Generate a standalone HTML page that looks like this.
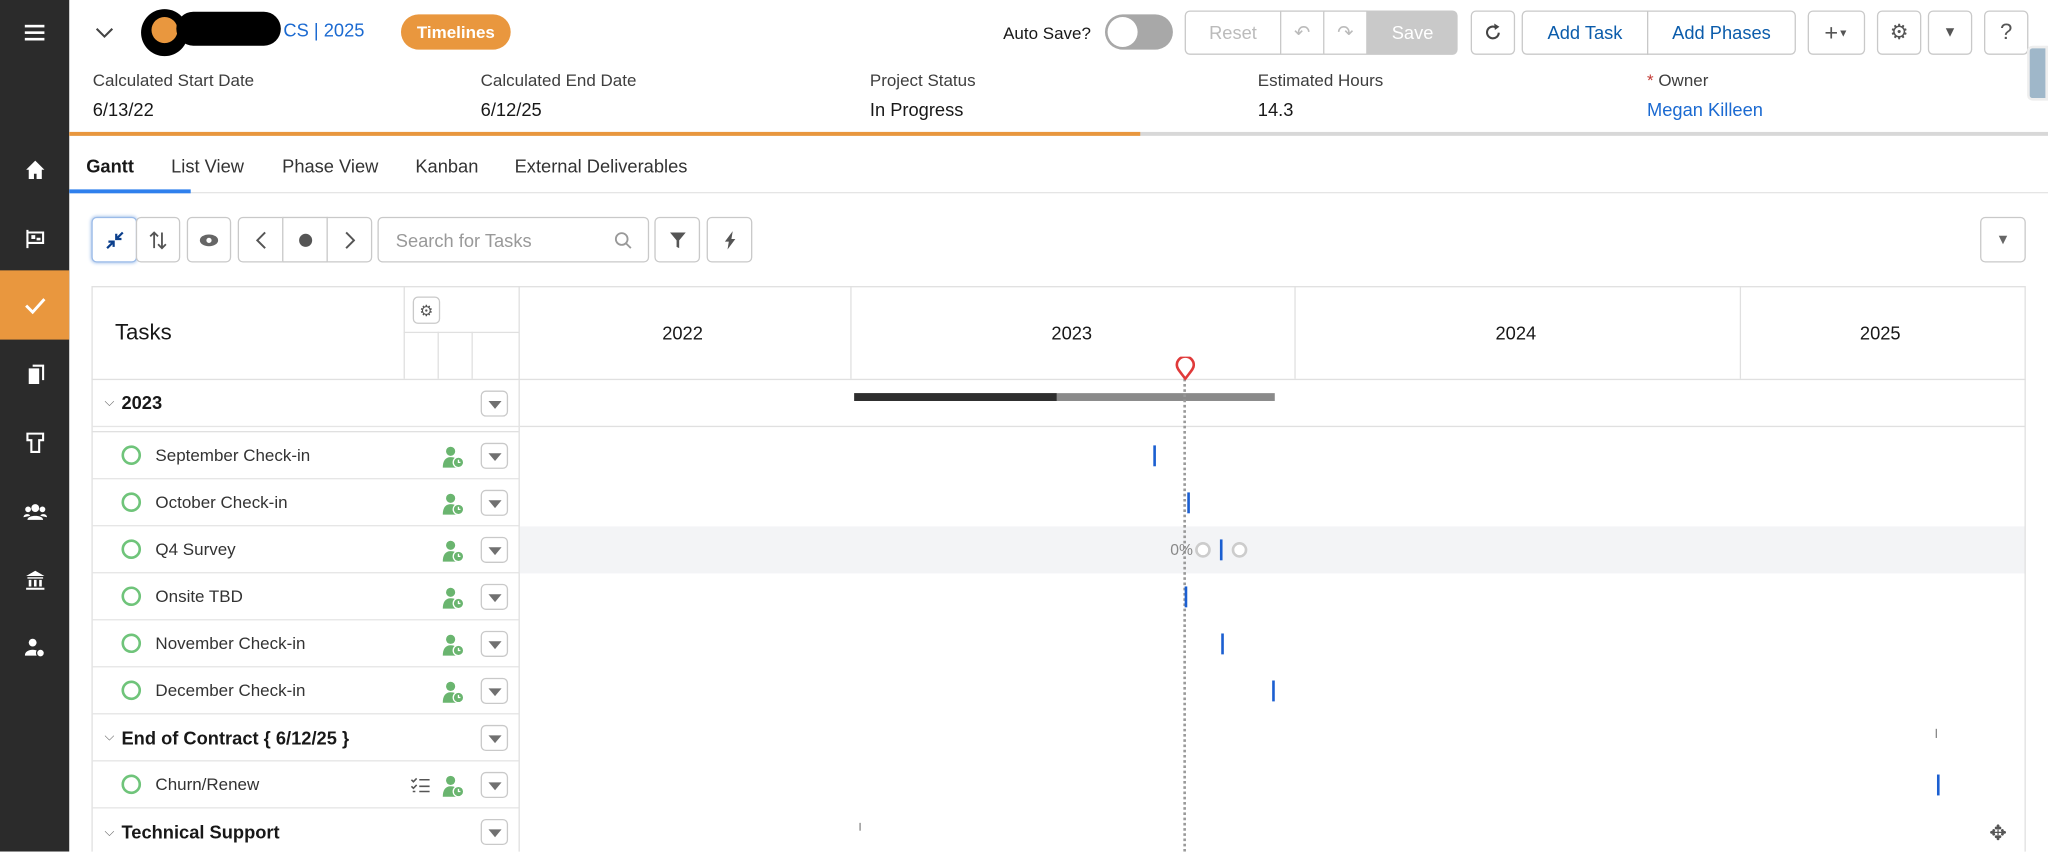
<!DOCTYPE html>
<html><head><meta charset="utf-8"><style>
*{box-sizing:border-box;margin:0;padding:0}
body{width:2048px;height:851px;overflow:hidden;background:#fff;font-family:"Liberation Sans",Arial,sans-serif}
#w{width:1568px;height:652px;transform:scale(1.306122);transform-origin:0 0;position:relative;color:#181818;overflow:hidden}
.a{position:absolute}
.btn{position:absolute;border:1px solid #c9c9c9;border-radius:4px;background:#fff;display:flex;align-items:center;justify-content:center;font-size:14px;color:#0b5cab}
.lbl{font-size:13px;color:#3e3e3e}
.val{font-size:14px;color:#181818}
.sb{position:absolute;left:0;width:53px;display:flex;align-items:center;justify-content:center}
.row{position:absolute;left:70px;width:327px;height:36px;border-bottom:1px solid #e5e5e5;font-size:13px;display:flex;align-items:center}
.circ{width:15px;height:15px;border:2px solid #6fc47a;border-radius:50%;position:absolute;left:23px}
.dd{position:absolute;left:298px;width:21px;height:20px;border:1px solid #c9c9c9;border-radius:4px;background:#fff}
.dd:after{content:"";position:absolute;left:5px;top:7px;border-left:5px solid transparent;border-right:5px solid transparent;border-top:6px solid #707070}
.tick{position:absolute;width:2px;background:#1b5fd1}
.pi{position:absolute;left:268px;top:10px}
</style></head><body><div id="w">
<svg width="0" height="0" style="position:absolute"><defs><symbol id="p" viewBox="0 0 18 18"><circle cx="7" cy="4.5" r="3.5" fill="#6ab56f"/><path d="M1 17c0-5 2-8 6-8s5 2 5 3v5z" fill="#6ab56f"/><circle cx="13" cy="13" r="4" fill="#6ab56f" stroke="#fff" stroke-width="1"/><path d="M13 11v2h1.5" stroke="#fff" stroke-width="1" fill="none"/></symbol></defs></svg>
<!-- sidebar -->
<div class="a" style="left:0;top:0;width:53px;height:652px;background:#2b2b2b"></div>
<div class="sb" style="top:15px;height:20px"><div style="width:15px;height:12px;border-top:2px solid #fff;border-bottom:2px solid #fff;position:relative"><div style="position:absolute;top:3px;left:0;width:15px;height:2px;background:#fff"></div></div></div>
<div class="sb" style="top:120px;height:20px"><svg width="16" height="16" viewBox="0 0 16 16"><path d="M8 1L1 8h2v7h4v-4h2v4h4V8h2z" fill="#fff"/></svg></div>
<div class="sb" style="top:173px;height:20px"><svg width="16" height="16" viewBox="0 0 16 16"><path d="M2 1v14M2 3h12v8H2" stroke="#fff" stroke-width="1.6" fill="none"/><path d="M5 5h3v3H5zM9 7h3v2H9z" fill="#fff"/></svg></div>
<div class="a" style="left:0;top:207px;width:53px;height:53px;background:#e9973e"></div>
<div class="sb" style="top:224px;height:20px"><svg width="18" height="14" viewBox="0 0 18 14"><path d="M2 7l5 5L16 2" stroke="#fff" stroke-width="2.2" fill="none"/></svg></div>
<div class="sb" style="top:277px;height:20px"><svg width="16" height="16" viewBox="0 0 16 16"><path d="M3 3h8v12H3z" fill="#fff"/><path d="M6 1h8v11" stroke="#fff" stroke-width="1.6" fill="none"/></svg></div>
<div class="sb" style="top:329px;height:20px"><svg width="16" height="16" viewBox="0 0 16 16"><path d="M2 1h12v5h-3v9H5V6H2z" fill="none" stroke="#fff" stroke-width="1.6"/></svg></div>
<div class="sb" style="top:382px;height:20px"><svg width="18" height="14" viewBox="0 0 18 14"><circle cx="9" cy="4" r="3" fill="#fff"/><circle cx="3.5" cy="5" r="2.2" fill="#fff"/><circle cx="14.5" cy="5" r="2.2" fill="#fff"/><path d="M3 13c0-4 12-4 12 0zM0 11c0-3 5-3 5-1zM13 10c0-2 5-2 5 1z" fill="#fff"/></svg></div>
<div class="sb" style="top:434px;height:20px"><svg width="16" height="16" viewBox="0 0 16 16"><path d="M8 1L1 5h14zM2 6h12v1H2zM3 8h2v5H3zM7 8h2v5H7zM11 8h2v5h-2zM1 14h14v1.5H1z" fill="#fff"/></svg></div>
<div class="sb" style="top:486px;height:20px"><svg width="16" height="16" viewBox="0 0 16 16"><circle cx="6" cy="4" r="3" fill="#fff"/><path d="M0 14c0-6 12-6 12 0z" fill="#fff"/><circle cx="12" cy="12" r="3" fill="#fff" stroke="#2b2b2b"/></svg></div>

<!-- header -->
<svg class="a" style="left:72px;top:19px" width="16" height="12"><path d="M2 3l6 6 6-6" stroke="#444" stroke-width="1.6" fill="none"/></svg>
<div class="a" style="left:108px;top:7px;width:36px;height:36px;border-radius:50%;background:#000"></div>
<div class="a" style="left:116px;top:13px;width:20px;height:20px;border-radius:50%;background:#e9973e"></div>
<div class="a" style="left:135px;top:9px;width:80px;height:26px;border-radius:13px;background:#000"></div>
<div class="a" style="left:217px;top:15px;font-size:14px;color:#1b6ad1">CS | 2025</div>
<div class="a" style="left:307px;top:11px;width:84px;height:27px;border-radius:14px;background:#e9973e;color:#fff;font-size:13px;font-weight:bold;display:flex;align-items:center;justify-content:center">Timelines</div>
<div class="a" style="left:768px;top:18px;font-size:13px">Auto Save?</div>
<div class="a" style="left:846px;top:11px;width:52px;height:27px;border-radius:14px;background:#a8a8a8"><div style="position:absolute;left:2px;top:2px;width:23px;height:23px;border-radius:50%;background:#fff"></div></div>
<div class="btn" style="left:907px;top:8px;width:74px;height:34px;color:#bbb;border-radius:4px 0 0 4px">Reset</div>
<div class="btn" style="left:980px;top:8px;width:34px;height:34px;color:#bbb;border-radius:0;font-size:15px">↶</div>
<div class="btn" style="left:1013px;top:8px;width:34px;height:34px;color:#bbb;border-radius:0;font-size:15px">↷</div>
<div class="btn" style="left:1047px;top:8px;width:69px;height:34px;background:#c9c9c9;border-color:#c9c9c9;color:#fff;border-radius:0 4px 4px 0">Save</div>
<div class="btn" style="left:1126px;top:8px;width:34px;height:34px"><svg width="14" height="14" viewBox="0 0 14 14"><path d="M11.5 7A4.5 4.5 0 1 1 9 2.8" stroke="#444" stroke-width="1.6" fill="none"/><path d="M8 0l4 2.5-3.5 2.5z" fill="#444"/></svg></div>
<div class="btn" style="left:1165px;top:8px;width:97px;height:34px;border-radius:4px 0 0 4px">Add Task</div>
<div class="btn" style="left:1261px;top:8px;width:114px;height:34px;border-radius:0 4px 4px 0">Add Phases</div>
<div class="btn" style="left:1384px;top:8px;width:44px;height:34px;color:#555;font-size:18px">+<span style="font-size:8px">▼</span></div>
<div class="btn" style="left:1437px;top:8px;width:34px;height:34px;color:#555;font-size:16px">⚙</div>
<div class="btn" style="left:1476px;top:8px;width:34px;height:34px;color:#555;font-size:11px">▼</div>
<div class="btn" style="left:1519px;top:8px;width:34px;height:34px;color:#555;font-size:17px">?</div>
<div class="a" style="left:1552px;top:35px;width:16px;height:42px;background:#9fb7c9;border:2px solid #eee;border-radius:4px 0 0 4px"></div>

<div class="a lbl" style="left:71px;top:54px">Calculated Start Date</div><div class="a val" style="left:71px;top:76px">6/13/22</div>
<div class="a lbl" style="left:368px;top:54px">Calculated End Date</div><div class="a val" style="left:368px;top:76px">6/12/25</div>
<div class="a lbl" style="left:666px;top:54px">Project Status</div><div class="a val" style="left:666px;top:76px">In Progress</div>
<div class="a lbl" style="left:963px;top:54px">Estimated Hours</div><div class="a val" style="left:963px;top:76px">14.3</div>
<div class="a lbl" style="left:1261px;top:54px"><span style="color:#c23934">*</span> Owner</div><div class="a val" style="left:1261px;top:76px;color:#1b6ad1">Megan Killeen</div>
<div class="a" style="left:53px;top:101px;width:1515px;height:3px;background:#d8d8d8"></div>
<div class="a" style="left:53px;top:101px;width:820px;height:3px;background:#e9973e"></div>

<!-- tabs -->
<div class="a" style="left:53px;top:147px;width:1515px;height:1px;background:#e5e5e5"></div>
<div class="a" style="left:53px;top:145px;width:93px;height:3px;background:#2f80ed"></div>
<div class="a" style="top:119px;left:66px;font-size:14px;font-weight:bold">Gantt</div>
<div class="a" style="top:119px;left:131px;font-size:14px;color:#333">List View</div>
<div class="a" style="top:119px;left:216px;font-size:14px;color:#333">Phase View</div>
<div class="a" style="top:119px;left:318px;font-size:14px;color:#333">Kanban</div>
<div class="a" style="top:119px;left:394px;font-size:14px;color:#333">External Deliverables</div>

<!-- toolbar -->
<div class="btn" style="left:70px;top:166px;width:35px;height:35px;border-color:#9bbbe8;box-shadow:0 0 3px #9bbbe8"><svg width="14" height="14" viewBox="0 0 14 14"><path d="M13 1L8.5 5.5M8 2v4h4M1 13l4.5-4.5M2 8h4v4" stroke="#0b3f8c" stroke-width="1.7" fill="none"/></svg></div>
<div class="btn" style="left:104px;top:166px;width:34px;height:35px"><svg width="14" height="14" viewBox="0 0 14 14"><path d="M4 13V1M1 4l3-3 3 3M10 1v12M7 10l3 3 3-3" stroke="#555" stroke-width="1.4" fill="none"/></svg></div>
<div class="btn" style="left:143px;top:166px;width:34px;height:35px;color:#555"><svg width="16" height="10"><ellipse cx="8" cy="5" rx="7" ry="4.5" fill="#666"/><circle cx="8" cy="5" r="2" fill="#fff"/></svg></div>
<div class="btn" style="left:182px;top:166px;width:35px;height:35px;border-radius:4px 0 0 4px"><svg width="8" height="14"><path d="M7 1L1 7l6 6" stroke="#555" stroke-width="1.5" fill="none"/></svg></div>
<div class="btn" style="left:216px;top:166px;width:35px;height:35px;border-radius:0"><div style="width:10px;height:10px;border-radius:50%;background:#555"></div></div>
<div class="btn" style="left:250px;top:166px;width:35px;height:35px;border-radius:0 4px 4px 0"><svg width="8" height="14"><path d="M1 1l6 6-6 6" stroke="#555" stroke-width="1.5" fill="none"/></svg></div>
<div class="btn" style="left:289px;top:166px;width:208px;height:35px;justify-content:flex-start;padding-left:13px;color:#999">Search for Tasks<svg style="position:absolute;right:12px" width="14" height="14"><circle cx="6" cy="6" r="4.5" stroke="#999" stroke-width="1.4" fill="none"/><path d="M9.5 9.5l3.5 3.5" stroke="#999" stroke-width="1.4"/></svg></div>
<div class="btn" style="left:501px;top:166px;width:35px;height:35px"><svg width="14" height="14"><path d="M1 1h12L8 7v6L6 12V7z" fill="#555"/></svg></div>
<div class="btn" style="left:541px;top:166px;width:35px;height:35px"><svg width="10" height="14"><path d="M7 0L1 8h3l-1 6 6-8H6z" fill="#555"/></svg></div>
<div class="btn" style="left:1516px;top:166px;width:35px;height:35px;color:#666;font-size:11px">▼</div>

<!-- table -->
<div class="a" style="left:70px;top:219px;width:1481px;height:460px;border:1px solid #e0e0e0"></div>
<div class="a" style="left:70px;top:290px;width:1481px;height:1px;background:#e0e0e0"></div>
<div class="a" style="left:397px;top:219px;width:1px;height:440px;background:#e0e0e0"></div>
<div class="a" style="left:309px;top:219px;width:1px;height:71px;background:#e0e0e0"></div>
<div class="a" style="left:309px;top:254px;width:88px;height:1px;background:#e0e0e0"></div>
<div class="a" style="left:335px;top:254px;width:1px;height:36px;background:#e0e0e0"></div>
<div class="a" style="left:361px;top:254px;width:1px;height:36px;background:#e0e0e0"></div>
<div class="btn" style="left:316px;top:227px;width:21px;height:21px;color:#555;font-size:12px">⚙</div>
<div class="a" style="left:88px;top:245px;font-size:17px">Tasks</div>
<div class="a" style="left:651px;top:219px;width:1px;height:71px;background:#e0e0e0"></div>
<div class="a" style="left:991px;top:219px;width:1px;height:71px;background:#e0e0e0"></div>
<div class="a" style="left:1332px;top:219px;width:1px;height:71px;background:#e0e0e0"></div>
<div class="a" style="left:507px;top:247px;font-size:14px">2022</div>
<div class="a" style="left:805px;top:247px;font-size:14px">2023</div>
<div class="a" style="left:1145px;top:247px;font-size:14px">2024</div>
<div class="a" style="left:1424px;top:247px;font-size:14px">2025</div>

<div class="a" style="left:398px;top:403px;width:1152px;height:36px;background:#f3f4f6"></div>
<div class="a" style="left:398px;top:326px;width:1152px;height:1px;background:#e0e0e0"></div>

<div class="row" style="top:290px;height:37px;font-weight:bold;font-size:14px"><span style="position:absolute;left:10px;font-weight:normal;font-size:10px;color:#666">⌵</span><span style="position:absolute;left:23px">2023</span><div class="dd" style="top:9px"></div></div>
<div class="a" style="left:70px;top:330px;width:327px;height:1px;background:#e0e0e0"></div>
<div class="row" style="top:331px;color:#333"><div class="circ"></div><span style="position:absolute;left:49px">September Check-in</span><svg class="pi" width="18" height="18"><use href="#p"/></svg><div class="dd" style="top:8px"></div></div>
<div class="row" style="top:367px;color:#333"><div class="circ"></div><span style="position:absolute;left:49px">October Check-in</span><svg class="pi" width="18" height="18"><use href="#p"/></svg><div class="dd" style="top:8px"></div></div>
<div class="row" style="top:403px;color:#333"><div class="circ"></div><span style="position:absolute;left:49px">Q4 Survey</span><svg class="pi" width="18" height="18"><use href="#p"/></svg><div class="dd" style="top:8px"></div></div>
<div class="row" style="top:439px;color:#333"><div class="circ"></div><span style="position:absolute;left:49px">Onsite TBD</span><svg class="pi" width="18" height="18"><use href="#p"/></svg><div class="dd" style="top:8px"></div></div>
<div class="row" style="top:475px;color:#333"><div class="circ"></div><span style="position:absolute;left:49px">November Check-in</span><svg class="pi" width="18" height="18"><use href="#p"/></svg><div class="dd" style="top:8px"></div></div>
<div class="row" style="top:511px;color:#333"><div class="circ"></div><span style="position:absolute;left:49px">December Check-in</span><svg class="pi" width="18" height="18"><use href="#p"/></svg><div class="dd" style="top:8px"></div></div>
<div class="row" style="top:547px;font-weight:bold;font-size:14px"><span style="position:absolute;left:10px;font-weight:normal;font-size:10px;color:#666">⌵</span><span style="position:absolute;left:23px">End of Contract { 6/12/25 }</span><div class="dd" style="top:8px"></div></div>
<div class="row" style="top:583px;color:#333"><div class="circ"></div><span style="position:absolute;left:49px">Churn/Renew</span><svg style="position:absolute;left:244px;top:12px" width="15" height="12" viewBox="0 0 15 12"><path d="M1 2l1.5 1.5L5 1M1 7l1.5 1.5L5 6M7 2h8M7 7h8M7 11h8M2 11h2" stroke="#555" stroke-width="1.2" fill="none"/></svg><svg class="pi" width="18" height="18"><use href="#p"/></svg><div class="dd" style="top:8px"></div></div>
<div class="row" style="top:619px;font-weight:bold;font-size:14px;border:none"><span style="position:absolute;left:10px;font-weight:normal;font-size:10px;color:#666">⌵</span><span style="position:absolute;left:23px">Technical Support</span><div class="dd" style="top:8px"></div></div>

<!-- gantt -->
<div class="a" style="left:654px;top:301px;width:322px;height:6px;background:#8a8a8a"></div>
<div class="a" style="left:654px;top:301px;width:155px;height:6px;background:#2e2e2e"></div>
<div class="a" style="left:906px;top:285px;height:367px;border-left:2px dotted #999"></div>
<svg class="a" style="left:900px;top:273px" width="15" height="18"><path d="M7.5 17C3 11 1 9 1 6.5a6.5 6.5 0 0113 0C14 9 12 11 7.5 17z" fill="#fff" stroke="#e03a3a" stroke-width="2"/></svg>
<div class="tick" style="left:883px;top:341px;height:16px"></div>
<div class="tick" style="left:909px;top:377px;height:16px"></div>
<div class="tick" style="left:934px;top:413px;height:16px"></div>
<div class="a" style="left:896px;top:414px;font-size:12px;color:#888">0%</div>
<div class="a" style="left:915px;top:415px;width:12px;height:12px;border-radius:50%;border:2px solid #ccc;background:#fff"></div>
<div class="a" style="left:943px;top:415px;width:12px;height:12px;border-radius:50%;border:2px solid #ccc;background:#fff"></div>
<div class="tick" style="left:907px;top:449px;height:16px"></div>
<div class="tick" style="left:935px;top:485px;height:16px"></div>
<div class="tick" style="left:974px;top:521px;height:16px"></div>
<div class="tick" style="left:1482px;top:558px;height:7px;width:1px;background:#888"></div>
<div class="tick" style="left:1483px;top:593px;height:16px"></div>
<div class="tick" style="left:658px;top:630px;height:6px;width:1px;background:#888"></div>
<div class="a" style="left:1523px;top:628px;font-size:16px;color:#555">✥</div>
</div></body></html>
